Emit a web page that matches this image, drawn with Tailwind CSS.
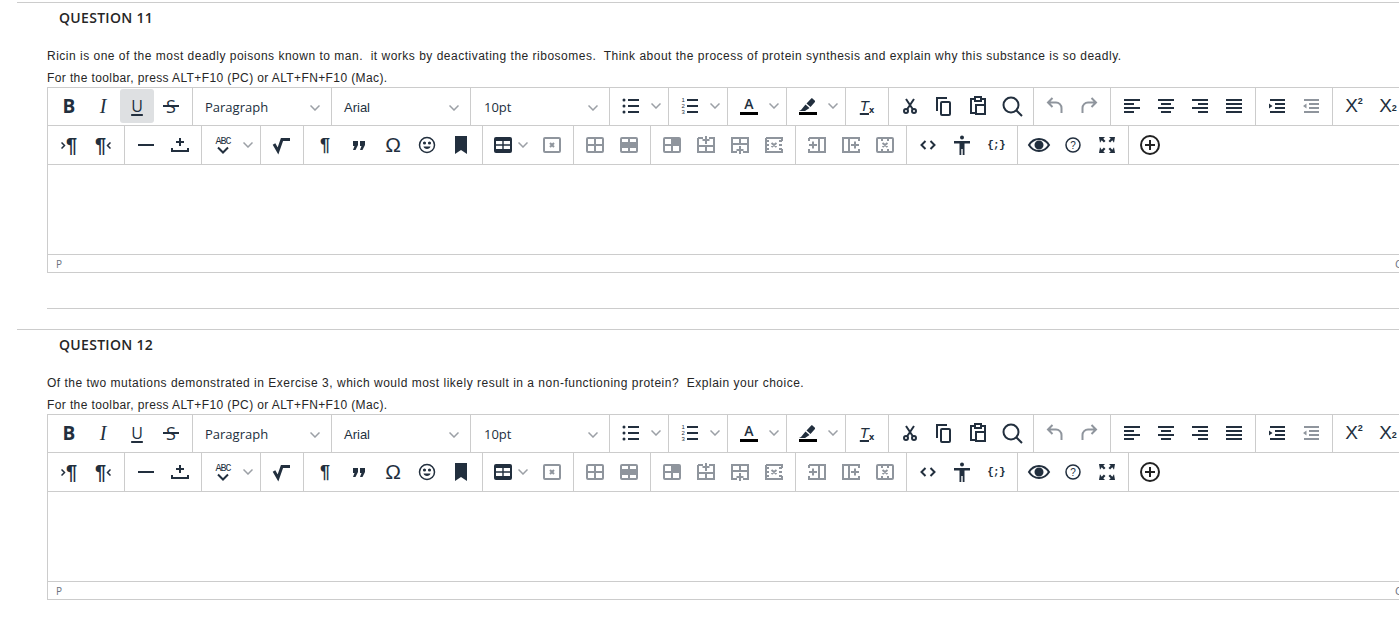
<!DOCTYPE html>
<html lang="en">
<head>
    <meta charset="UTF-8">
    <title>Questions</title>
    <script src="https://cdn.jsdelivr.net/npm/@tailwindcss/browser@4"></script>
</head>
<body class="bg-white h-[627px] overflow-hidden font-['Liberation_Sans',sans-serif]">
    <div class="pt-[2px] w-[1399px] overflow-hidden">
        <section class="ml-[17px] border-t border-[#ccc]">
            <h2 class="h-[28px] pl-[42px] flex items-center font-['Open_Sans',sans-serif] font-semibold text-[14px] tracking-[0.3px] text-[#262626]">QUESTION 11</h2>
            <p class="ml-[30px] mt-[15px] h-[20px] leading-[20px] text-[12px] tracking-[0.5px] text-[#262626] whitespace-pre">Ricin is one of the most deadly poisons known to man.  it works by deactivating the ribosomes.  Think about the process of protein synthesis and explain why this substance is so deadly.</p>
            <div class="editor-slot ml-[30px]" data-active="true"></div>
            <div class="ml-[30px] mt-[35px] border-t border-[#ccc]"></div>
        </section>
        <section class="ml-[17px] mt-[20px] border-t border-[#ccc]">
            <h2 class="h-[28px] pl-[42px] flex items-center font-['Open_Sans',sans-serif] font-semibold text-[14px] tracking-[0.3px] text-[#262626]">QUESTION 12</h2>
            <p class="ml-[30px] mt-[15px] h-[20px] leading-[20px] text-[12px] tracking-[0.5px] text-[#262626] whitespace-pre">Of the two mutations demonstrated in Exercise 3, which would most likely result in a non-functioning protein?  Explain your choice.</p>
            <div class="editor-slot ml-[30px]"></div>
        </section>
    </div>

    <template id="editor">
        <p class="mt-[2px] h-[19px] leading-[20px] text-[12px] tracking-[0.39px] text-[#262626]">For the toolbar, press ALT+F10 (PC) or ALT+FN+F10 (Mac).</p>
        <div class="w-[1420px] border border-[#ccc] text-[#222f3e] font-['Open_Sans',sans-serif]">
            <!-- row 1 -->
            <div class="flex h-[38px] pt-[1px] border-b border-[#ccc]">
                <div class="flex px-1 h-[37px] -mt-[1px] pt-[1px] border-r border-[#ccc]">
                    <span class="w-[34px] h-[34px] flex items-center justify-center font-bold text-[19px]">B</span>
                    <span class="w-[34px] h-[34px] flex items-center justify-center italic text-[20px] font-['Liberation_Serif',serif]">I</span>
                    <span data-underline class="w-[34px] h-[34px] rounded-[3px] flex items-center justify-center font-medium text-[16px] underline decoration-2 underline-offset-2">U</span>
                    <span class="relative w-[34px] h-[34px] flex items-center justify-center font-medium text-[18px]">S<span class="absolute left-[9px] top-[16px] w-[16px] h-[2px] bg-[#222f3e]"></span></span>
                </div>
                <div class="flex items-center justify-between w-[139px] h-[37px] -mt-[1px] pt-[2px] pl-[12px] pr-[11px] border-r border-[#ccc] text-[13px]">Paragraph
                    <svg width="10" height="6" viewBox="0 0 10 6" fill="none" stroke="#9ca0a6" stroke-width="1.5"><path d="M.5.5 5 5 9.500.5"/></svg>
                </div>
                <div class="flex items-center justify-between w-[139px] h-[37px] -mt-[1px] pt-[2px] pl-[12px] pr-[11px] border-r border-[#ccc] text-[13px] font-['Liberation_Sans',sans-serif]">Arial
                    <svg width="10" height="6" viewBox="0 0 10 6" fill="none" stroke="#9ca0a6" stroke-width="1.5"><path d="M.5.5 5 5 9.500.5"/></svg>
                </div>
                <div class="flex items-center justify-between w-[139px] h-[37px] -mt-[1px] pt-[2px] pl-[13px] pr-[11px] border-r border-[#ccc] text-[13px]">10pt
                    <svg width="10" height="6" viewBox="0 0 10 6" fill="none" stroke="#9ca0a6" stroke-width="1.5"><path d="M.5.5 5 5 9.500.5"/></svg>
                </div>
                <div class="flex px-1 h-[37px] -mt-[1px] pt-[1px] border-r border-[#ccc]">
                    <span class="w-[34px] h-[34px] flex items-center justify-center"><svg width="24" height="24" viewBox="0 0 24 24" fill="#222f3e"><circle cx="5" cy="6" r="1.5"/><circle cx="5" cy="12" r="1.5"/><circle cx="5" cy="18" r="1.5"/><path d="M9 5h11v2H9zM9 11h11v2H9zM9 17h11v2H9z"/></svg></span>
                    <span class="w-[16px] h-[34px] flex items-center justify-center"><svg width="10" height="6" viewBox="0 0 10 6" fill="none" stroke="#9ca0a6" stroke-width="1.5"><path d="M.5.5 5 5 9.500.5"/></svg></span>
                </div>
                <div class="flex px-1 h-[37px] -mt-[1px] pt-[1px] border-r border-[#ccc]">
                    <span class="w-[34px] h-[34px] flex items-center justify-center"><svg width="24" height="24" viewBox="0 0 24 24" fill="#222f3e"><text x="3.5" y="8" font-size="6" font-family="Liberation Sans">1</text><text x="3.5" y="14" font-size="6" font-family="Liberation Sans">2</text><text x="3.5" y="20" font-size="6" font-family="Liberation Sans">3</text><path d="M9 5h11v2H9zM9 11h11v2H9zM9 17h11v2H9z"/></svg></span>
                    <span class="w-[16px] h-[34px] flex items-center justify-center"><svg width="10" height="6" viewBox="0 0 10 6" fill="none" stroke="#9ca0a6" stroke-width="1.5"><path d="M.5.5 5 5 9.500.5"/></svg></span>
                </div>
                <div class="flex px-1 h-[37px] -mt-[1px] pt-[1px] border-r border-[#ccc]">
                    <span class="w-[34px] h-[34px] flex flex-col items-center justify-center"><span class="font-semibold text-[14px] leading-[14px]">A</span><span class="w-[18px] h-[3px] bg-black mt-[1px]"></span></span>
                    <span class="w-[16px] h-[34px] flex items-center justify-center"><svg width="10" height="6" viewBox="0 0 10 6" fill="none" stroke="#9ca0a6" stroke-width="1.5"><path d="M.5.5 5 5 9.500.5"/></svg></span>
                </div>
                <div class="flex px-1 h-[37px] -mt-[1px] pt-[1px] border-r border-[#ccc]">
                    <span class="w-[34px] h-[34px] flex flex-col items-center justify-center"><svg width="18" height="13" viewBox="0 0 18 13" fill="#222f3e"><path d="M2 12 6.500 6.500l4 3.500L6 13H0zM7.500 5.500 12 .7c.5-.5 1.200-.5 1.700 0l2 1.800c.5.5.5 1.200 0 1.700L11.500 9z"/></svg><span class="w-[18px] h-[3px] bg-black mt-[1px]"></span></span>
                    <span class="w-[16px] h-[34px] flex items-center justify-center"><svg width="10" height="6" viewBox="0 0 10 6" fill="none" stroke="#9ca0a6" stroke-width="1.5"><path d="M.5.5 5 5 9.500.5"/></svg></span>
                </div>
                <div class="flex px-1 h-[37px] -mt-[1px] pt-[1px] border-r border-[#ccc]">
                    <span class="w-[34px] h-[34px] flex items-center justify-center"><span class="italic text-[15px] leading-[16px] underline decoration-2 underline-offset-2 font-['Liberation_Sans',sans-serif]">T</span><span class="text-[9px] font-bold mt-[7px]">x</span></span>
                </div>
                <div class="flex px-1 h-[37px] -mt-[1px] pt-[1px] border-r border-[#ccc]">
                    <span class="w-[34px] h-[34px] flex items-center justify-center"><svg width="24" height="24" viewBox="0 0 24 24" fill="none" stroke="#222f3e" stroke-width="2"><circle cx="8" cy="17" r="2"/><circle cx="16" cy="17" r="2"/><path d="M8 5l7 10.500M16 5 9 15.500"/></svg></span>
                    <span class="w-[34px] h-[34px] flex items-center justify-center"><svg width="24" height="24" viewBox="0 0 24 24" fill="none" stroke="#222f3e" stroke-width="2"><path d="M5 17V4h10"/><rect x="9" y="8" width="9" height="13" rx="1"/></svg></span>
                    <span class="w-[34px] h-[34px] flex items-center justify-center"><svg width="24" height="24" viewBox="0 0 24 24" fill="none" stroke="#222f3e" stroke-width="2"><path d="M9 5H5v14h4M15 5h4v11"/><rect x="9" y="3" width="6" height="4"/><rect x="10" y="11" width="9" height="9"/></svg></span>
                    <span class="w-[34px] h-[34px] flex items-center justify-center"><svg width="24" height="24" viewBox="0 0 24 24" fill="none" stroke="#222f3e" stroke-width="2"><circle cx="11" cy="11" r="7.500"/><path d="m16.500 16.500 5.500 5.500"/></svg></span>
                </div>
                <div class="flex px-1 h-[37px] -mt-[1px] pt-[1px] border-r border-[#ccc]">
                    <span class="w-[34px] h-[34px] flex items-center justify-center"><svg width="24" height="24" viewBox="0 0 24 24" fill="none" stroke="#8f959d" stroke-width="2"><path d="M9.500 4 5 8.500 9.500 13M5 8.500h8a5.500 5.500 0 0 1 5.500 5.500v5"/></svg></span>
                    <span class="w-[34px] h-[34px] flex items-center justify-center"><svg width="24" height="24" viewBox="0 0 24 24" fill="none" stroke="#8f959d" stroke-width="2"><path d="M14.500 4 19 8.500 14.500 13M19 8.500h-8a5.500 5.500 0 0 0-5.500 5.500v5"/></svg></span>
                </div>
                <div class="flex px-1 h-[37px] -mt-[1px] pt-[1px] border-r border-[#ccc]">
                    <span class="w-[34px] h-[34px] flex items-center justify-center"><svg width="24" height="24" viewBox="0 0 24 24" fill="#222f3e"><path d="M4 5h16v2H4zM4 9h10v2H4zM4 13h16v2H4zM4 17h10v2H4z"/></svg></span>
                    <span class="w-[34px] h-[34px] flex items-center justify-center"><svg width="24" height="24" viewBox="0 0 24 24" fill="#222f3e"><path d="M4 5h16v2H4zM7 9h10v2H7zM4 13h16v2H4zM7 17h10v2H7z"/></svg></span>
                    <span class="w-[34px] h-[34px] flex items-center justify-center"><svg width="24" height="24" viewBox="0 0 24 24" fill="#222f3e"><path d="M4 5h16v2H4zM10 9h10v2H10zM4 13h16v2H4zM10 17h10v2H10z"/></svg></span>
                    <span class="w-[34px] h-[34px] flex items-center justify-center"><svg width="24" height="24" viewBox="0 0 24 24" fill="#222f3e"><path d="M4 5h16v2H4zM4 9h16v2H4zM4 13h16v2H4zM4 17h16v2H4z"/></svg></span>
                </div>
                <div class="flex px-1 h-[37px] -mt-[1px] pt-[1px] border-r border-[#ccc]">
                    <span class="w-[34px] h-[34px] flex items-center justify-center"><svg width="24" height="24" viewBox="0 0 24 24" fill="#222f3e"><path d="M5 5h15v2H5zM10 9h10v2H10zM10 13h10v2H10zM5 17h15v2H5zM4 9.500 7.500 12 4 14.500z"/></svg></span>
                    <span class="w-[34px] h-[34px] flex items-center justify-center"><svg width="24" height="24" viewBox="0 0 24 24" fill="#8f959d"><path d="M5 5h15v2H5zM10 9h10v2H10zM10 13h10v2H10zM5 17h15v2H5zM7.500 9.500 4 12l3.500 2.500z"/></svg></span>
                </div>
                <div class="flex px-1 h-[37px] -mt-[1px] pt-[1px] font-['Liberation_Sans',sans-serif]">
                    <span class="w-[34px] h-[34px] flex items-center justify-center text-[19px]">X<sup class="text-[9px] -mt-[2px] font-bold">2</sup></span>
                    <span class="w-[34px] h-[34px] flex items-center justify-center text-[19px]">X<sub class="text-[9px] font-bold">2</sub></span>
                </div>
            </div>
            <!-- row 2 -->
            <div class="flex h-[39px] border-b border-[#ccc]">
                <div class="flex px-1 border-r border-[#ccc] pt-[2px]">
                    <span class="w-[34px] h-[34px] flex items-center justify-center font-bold text-[20px] font-['Liberation_Sans',sans-serif]"><svg width="5" height="7" viewBox="0 0 5 7" fill="none" stroke="#222f3e" stroke-width="1.5"><path d="m.5.5 3 3-3 3"/></svg>¶</span>
                    <span class="w-[34px] h-[34px] flex items-center justify-center font-bold text-[20px] font-['Liberation_Sans',sans-serif]">¶<svg width="5" height="7" viewBox="0 0 5 7" fill="none" stroke="#222f3e" stroke-width="1.5"><path d="m4.500.5-3 3 3 3"/></svg></span>
                </div>
                <div class="flex px-1 border-r border-[#ccc] pt-[2px]">
                    <span class="w-[34px] h-[34px] flex items-center justify-center"><svg width="24" height="24" viewBox="0 0 24 24" fill="#222f3e"><path d="M4 11h16v2H4z"/></svg></span>
                    <span class="w-[34px] h-[34px] flex items-center justify-center"><svg width="24" height="24" viewBox="0 0 24 24" fill="#222f3e"><path d="M11 5h2v3h3v2h-3v3h-2v-3H8V8h3zM3 15h2v2h14v-2h2v4H3z"/></svg></span>
                </div>
                <div class="flex px-1 border-r border-[#ccc] pt-[2px]">
                    <span class="w-[34px] h-[34px] flex flex-col items-center justify-center"><span class="text-[10px] leading-[9px] tracking-[-1px] font-['Liberation_Mono',monospace]">ABC</span><svg width="12" height="8" viewBox="0 0 12 8" fill="none" stroke="#222f3e" stroke-width="2"><path d="m1 1.500 5 5 5-5"/></svg></span>
                    <span class="w-[16px] h-[34px] flex items-center justify-center"><svg width="10" height="6" viewBox="0 0 10 6" fill="none" stroke="#9ca0a6" stroke-width="1.5"><path d="M.5.5 5 5 9.500.5"/></svg></span>
                </div>
                <div class="flex px-1 border-r border-[#ccc] pt-[2px]">
                    <span class="w-[34px] h-[34px] flex items-center justify-center"><svg width="24" height="24" viewBox="0 0 24 24" fill="none" stroke="#222f3e" stroke-width="3"><path d="m4 11 4 7 4-11.500h8"/></svg></span>
                </div>
                <div class="flex px-1 border-r border-[#ccc] pt-[2px]">
                    <span class="w-[34px] h-[34px] flex items-center justify-center font-bold text-[18px] font-['Liberation_Sans',sans-serif]">¶</span>
                    <span class="w-[34px] h-[34px] flex items-center justify-center"><svg width="24" height="24" viewBox="0 0 24 24" fill="#222f3e"><path d="M6 8h5v4l-2.500 5H6l1.500-4H6zM13 8h5v4l-2.500 5H13l1.500-4H13z"/></svg></span>
                    <span class="w-[34px] h-[34px] flex items-center justify-center text-[21px] font-['Liberation_Sans',sans-serif]">Ω</span>
                    <span class="w-[34px] h-[34px] flex items-center justify-center"><svg width="24" height="24" viewBox="0 0 24 24" fill="none" stroke="#222f3e" stroke-width="1.500"><circle cx="12" cy="12" r="7.500"/><circle cx="9.500" cy="10" r=".8" fill="#222f3e"/><circle cx="14.500" cy="10" r=".8" fill="#222f3e"/><path d="M8.500 13.500h7c-.3 1.500-1.700 2.500-3.500 2.500s-3.200-1-3.500-2.500z" fill="#222f3e" stroke="none"/></svg></span>
                    <span class="w-[34px] h-[34px] flex items-center justify-center"><svg width="24" height="24" viewBox="0 0 24 24" fill="#222f3e"><path d="M6 3h12v18l-6-4-6 4z"/></svg></span>
                </div>
                <div class="flex px-1 border-r border-[#ccc] pt-[2px]">
                    <span class="w-[34px] h-[34px] -ml-[1px] flex items-center justify-center"><svg width="24" height="24" viewBox="0 0 24 24"><rect x="3" y="4" width="18" height="16" rx="2" fill="#222f3e"/><path d="M5 8h6.300v3.300H5zM12.700 8H19v3.300h-6.300zM5 12.700h6.300V16H5zM12.700 12.700H19V16h-6.300z" fill="#fff"/></svg></span>
                    <span class="w-[16px] h-[34px] -ml-[2px] mr-[1px] flex items-center"><svg width="10" height="6" viewBox="0 0 10 6" fill="none" stroke="#9ca0a6" stroke-width="1.5"><path d="M.5.5 5 5 9.500.5"/></svg></span>
                    <span class="w-[34px] h-[34px] flex items-center justify-center"><svg width="24" height="24" viewBox="0 0 24 24" fill="none" stroke="#8f959d" stroke-width="2"><rect x="4" y="5" width="16" height="14" rx="1"/><path d="m10 10 4 4m0-4-4 4"/></svg></span>
                </div>
                <div class="flex px-1 border-r border-[#ccc] pt-[2px]">
                    <span class="w-[34px] h-[34px] flex items-center justify-center"><svg width="24" height="24" viewBox="0 0 24 24" fill="none" stroke="#8f959d" stroke-width="2"><rect x="4" y="5" width="16" height="14" rx="1"/><path d="M4 12h16M12 5v14"/></svg></span>
                    <span class="w-[34px] h-[34px] flex items-center justify-center"><svg width="24" height="24" viewBox="0 0 24 24" fill="none" stroke="#8f959d" stroke-width="2"><rect x="4" y="5" width="16" height="14" rx="1"/><path d="M4 12h16" stroke-width="6"/><path d="M12 5v14"/></svg></span>
                </div>
                <div class="flex px-1 border-r border-[#ccc] pt-[2px]">
                    <span class="w-[34px] h-[34px] flex items-center justify-center"><svg width="24" height="24" viewBox="0 0 24 24" fill="none" stroke="#8f959d" stroke-width="2"><rect x="4" y="5" width="16" height="14" rx="1"/><path d="M4 12h16M12 5v14"/><path d="M16 5v7" stroke-width="8"/></svg></span>
                    <span class="w-[34px] h-[34px] flex items-center justify-center"><svg width="24" height="24" viewBox="0 0 24 24" fill="none" stroke="#8f959d" stroke-width="2"><path d="M4 5h5M15 5h5v14H4V5M4 13h16M12 13v6M12 3v8M8.500 7h7"/></svg></span>
                    <span class="w-[34px] h-[34px] flex items-center justify-center"><svg width="24" height="24" viewBox="0 0 24 24" fill="none" stroke="#8f959d" stroke-width="2"><path d="M9 19H4V5h16v14h-5M4 11h16M12 5v6M12 13v8M8.500 17h7"/></svg></span>
                    <span class="w-[34px] h-[34px] flex items-center justify-center"><svg width="24" height="24" viewBox="0 0 24 24" fill="none" stroke="#8f959d" stroke-width="2"><path d="M4 5h16v3M20 16v3H4V5M4 8v8M4 8h3M4 12h3M4 16h3M17 8h3M17 12h3M17 16h3m-10.500-6 5 4m0-4-5 4"/></svg></span>
                </div>
                <div class="flex px-1 border-r border-[#ccc] pt-[2px]">
                    <span class="w-[34px] h-[34px] flex items-center justify-center"><svg width="24" height="24" viewBox="0 0 24 24" fill="none" stroke="#8f959d" stroke-width="2"><path d="M4 5h16v14H4v-3M4 8V5M14 5v14M4 12h8M8 8.500v7"/></svg></span>
                    <span class="w-[34px] h-[34px] flex items-center justify-center"><svg width="24" height="24" viewBox="0 0 24 24" fill="none" stroke="#8f959d" stroke-width="2"><path d="M20 8V5H4v14h16v-3M10 5v14M12 12h8M16 8.500v7"/></svg></span>
                    <span class="w-[34px] h-[34px] flex items-center justify-center"><svg width="24" height="24" viewBox="0 0 24 24" fill="none" stroke="#8f959d" stroke-width="2"><rect x="4" y="5" width="16" height="14" rx="1"/><path d="M9 5v3M9 16v3M15 5v3M15 16v3m-5.500-9 5 4m0-4-5 4"/></svg></span>
                </div>
                <div class="flex px-1 border-r border-[#ccc] pt-[2px]">
                    <span class="w-[34px] h-[34px] flex items-center justify-center"><svg width="24" height="24" viewBox="0 0 24 24" fill="none" stroke="#222f3e" stroke-width="2"><path d="M9.500 8 5.500 12l4 4M14.500 8l4 4-4 4"/></svg></span>
                    <span class="w-[34px] h-[34px] flex items-center justify-center"><svg width="24" height="24" viewBox="0 0 24 24" fill="#222f3e"><circle cx="12" cy="4.500" r="2"/><path d="M4 8h16v2.500h-5.500V22h-1.800v-6h-1.400v6H9.500V10.500H4z"/></svg></span>
                    <span class="w-[34px] h-[34px] flex items-center justify-center text-[11px] tracking-[-0.7px] font-bold font-['Liberation_Mono',monospace]">{;}</span>
                </div>
                <div class="flex px-1 border-r border-[#ccc] pt-[2px]">
                    <span class="w-[34px] h-[34px] flex items-center justify-center"><svg width="24" height="24" viewBox="0 0 24 24" fill="none" stroke="#222f3e" stroke-width="2"><path d="M2 12c2.500-4 6-6 10-6s7.500 2 10 6c-2.500 4-6 6-10 6s-7.500-2-10-6z"/><circle cx="12" cy="12" r="3.500" fill="#222f3e"/></svg></span>
                    <span class="w-[34px] h-[34px] flex items-center justify-center"><svg width="24" height="24" viewBox="0 0 24 24" fill="none" stroke="#222f3e" stroke-width="1.500"><circle cx="12" cy="12" r="7"/><text x="12" y="15.500" text-anchor="middle" font-size="10" fill="#222f3e" stroke="none" font-family="Liberation Sans">?</text></svg></span>
                    <span class="w-[34px] h-[34px] flex items-center justify-center"><svg width="24" height="24" viewBox="0 0 24 24" fill="#222f3e"><path d="M4 4h6L8.300 5.700l2.200 2.200-1.600 1.600-2.200-2.200L5 9.800zM20 4h-6l1.700 1.700-2.200 2.200 1.600 1.600 2.200-2.200L19 9.800zM4 20h6l-1.700-1.700 2.200-2.200-1.600-1.600-2.200 2.200L5 14.200zM20 20h-6l1.700-1.700-2.200-2.200 1.600-1.600 2.200 2.200 1.700-2.500z"/></svg></span>
                </div>
                <div class="flex px-1 pt-[2px]">
                    <span class="w-[34px] h-[34px] flex items-center justify-center"><svg width="24" height="24" viewBox="0 0 24 24" fill="none" stroke="#222" stroke-width="2"><circle cx="12" cy="12" r="9"/><path d="M12 7v10M7 12h10"/></svg></span>
                </div>
            </div>
            <div class="h-[90px] border-b border-[#ccc]"></div>
            <div class="h-[17px] pt-[1px] flex items-center pl-[8px] text-[10px] text-[#6b7280]">
                <span class="w-[1339px]">P</span><span class="text-[11px]">C</span>
            </div>
        </div>
    </template>

    <script>
        // both questions carry the same editor, only the first has underline switched on
        const tpl = document.getElementById('editor');
        document.querySelectorAll('.editor-slot').forEach(slot => {
            const copy = tpl.content.cloneNode(true);
            if (slot.dataset.active) {
                copy.querySelector('[data-underline]').classList.add('bg-[#dee0e2]');
            }
            slot.appendChild(copy);
        });
    </script>
</body>
</html>
